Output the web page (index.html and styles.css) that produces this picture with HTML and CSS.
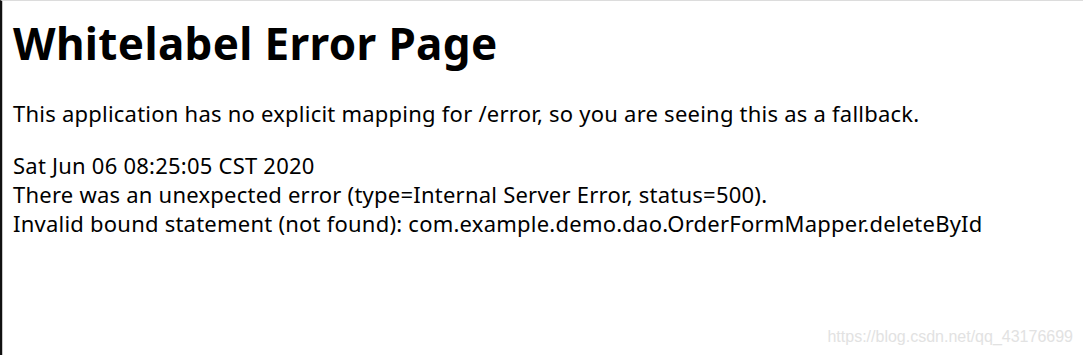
FILE: index.html
```html
<!DOCTYPE html>
<html>
<head>
<meta charset="utf-8">
<title>Error</title>
<link rel="stylesheet" href="styles.css">
</head>
<body>
<h1 class="title">Whitelabel Error Page</h1>
<p class="lead">This application has no explicit mapping for /error, so you are seeing this as a fallback.</p>
<div class="details">
  <div class="line">Sat Jun 06 08:25:05 CST 2020</div>
  <div class="line">There was an unexpected error (type=Internal Server Error, status=500).</div>
  <div class="line">Invalid bound statement (not found): com.example.demo.dao.OrderFormMapper.deleteById</div>
</div>
<div class="watermark">https://blog.csdn.net/qq_43176699</div>
</body>
</html>
```
FILE: styles.css
```css
html {
  margin: 0;
  min-height: 100%;
  box-sizing: border-box;
  border-top: 1px solid #dcdcdc;
  border-left: 2px solid #111;
  box-shadow: inset 1px 0 0 #c8c8c8;
  background: #fff;
}
body {
  margin: 0;
  padding: 13px 0 0 11px;
  font-family: "Noto Sans", "Open Sans", sans-serif;
  font-size: 22px;
  color: #000;
  letter-spacing: 0.23px;
}
.title {
  margin: 0;
  font-size: 44px;
  line-height: 58px;
  font-weight: 700;
  letter-spacing: 0.35px;
}
.lead {
  margin: 27px 0 23px;
  line-height: 29px;
}
.details .line {
  line-height: 29px;
}
.watermark {
  position: absolute;
  right: 10px;
  bottom: 9px;
  font-family: "Liberation Sans", Arial, sans-serif;
  font-size: 16px;
  letter-spacing: 0;
  color: #e2e2e2;
}
```
